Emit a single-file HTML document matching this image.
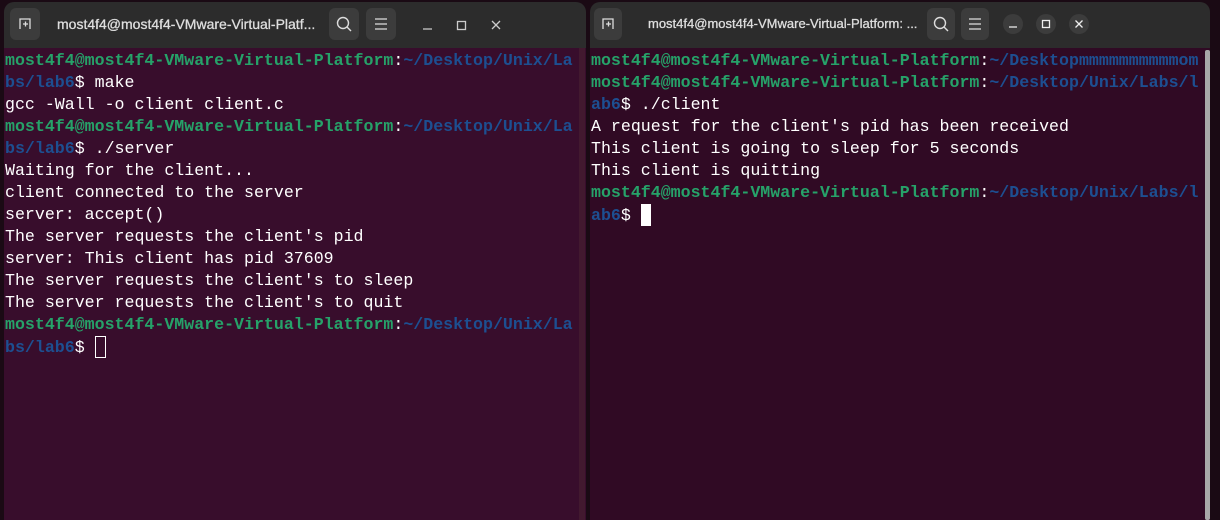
<!DOCTYPE html>
<html><head><style>
body{margin:0;width:1220px;height:520px;background:#1a0a14;position:relative;overflow:hidden;font-family:"Liberation Sans",sans-serif}
.win{position:absolute;top:2px;bottom:0;overflow:hidden;border-radius:10px 10px 0 0}
.hdr{position:absolute;left:0;right:0;top:0;height:46px;background:#2c2c2c}
.term{position:absolute;left:0;right:0;top:46px;bottom:0}
.btn{position:absolute;top:6px;width:30px;height:32px;background:#3c3c3c;border-radius:6px}
.title{position:absolute;top:14px;color:#dedede;font-size:14px;white-space:nowrap;-webkit-text-stroke:0.3px #dedede}
pre{margin:0;position:absolute;left:1px;top:2px;font-family:"Liberation Mono",monospace;font-size:16.6px;line-height:22px;color:#ffffff;font-weight:normal}
.g{color:#26a269;font-weight:bold}.b{color:#1d4f91;font-weight:bold}
.cur{display:inline-block;width:9px;height:19px;vertical-align:-4px}
svg{position:absolute}
</style></head><body>
<div class="win" style="left:4px;width:582px">
 <div class="hdr">
  <div class="btn" style="left:6px"><svg width="30" height="32"><path d="M10 21V11h10v10M13 16h5M15.5 13.5v5" stroke="#ddd" fill="none" stroke-width="1.3"/></svg></div>
  <div class="title" style="left:53px">most4f4@most4f4-VMware-Virtual-Platf...</div>
  <div class="btn" style="left:325px"><svg width="30" height="32"><circle cx="14" cy="15" r="5.5" stroke="#ddd" fill="none" stroke-width="1.4"/><path d="M18 19l4 4" stroke="#ddd" stroke-width="1.4"/></svg></div>
  <div class="btn" style="left:362px"><svg width="30" height="32"><path d="M9 11h12M9 16h12M9 21h12" stroke="#ddd" stroke-width="1.3"/></svg></div>
  <svg style="left:410px;top:8px" width="30" height="30"><path d="M9 19h9" stroke="#ccc" stroke-width="1.3"/></svg>
  <svg style="left:444px;top:8px" width="30" height="30"><rect x="9.5" y="11.5" width="8" height="8" stroke="#ccc" fill="none" stroke-width="1.3"/></svg>
  <svg style="left:478px;top:8px" width="30" height="30"><path d="M10 11l8 8M18 11l-8 8" stroke="#ccc" stroke-width="1.3"/></svg>
 </div>
 <div class="term" style="background:#380d2c">
<pre><span class="g">most4f4@most4f4-VMware-Virtual-Platform</span>:<span class="b">~/Desktop/Unix/La
bs/lab6</span>$ make
gcc -Wall -o client client.c
<span class="g">most4f4@most4f4-VMware-Virtual-Platform</span>:<span class="b">~/Desktop/Unix/La
bs/lab6</span>$ ./server
Waiting for the client...
client connected to the server
server: accept()
The server requests the client's pid
server: This client has pid 37609
The server requests the client's to sleep
The server requests the client's to quit
<span class="g">most4f4@most4f4-VMware-Virtual-Platform</span>:<span class="b">~/Desktop/Unix/La
bs/lab6</span>$ <span class="cur" style="border:1.5px solid #fff;box-sizing:border-box;height:22px;width:11px;vertical-align:-6px"></span></pre>
  <div style="position:absolute;left:575px;top:0;width:6px;bottom:0;background:#42192f"></div>
 </div>
</div>
<div class="win" style="left:590px;width:620px">
 <div class="hdr">
  <div class="btn" style="left:4px;width:28px"><svg width="28" height="32"><path d="M9 21V11h10v10M12 16h5M14.5 13.5v5" stroke="#ddd" fill="none" stroke-width="1.3"/></svg></div>
  <div class="title" style="left:58px;font-size:13px">most4f4@most4f4-VMware-Virtual-Platform: ...</div>
  <div class="btn" style="left:337px;width:28px"><svg width="28" height="32"><circle cx="13" cy="15" r="5.5" stroke="#ddd" fill="none" stroke-width="1.4"/><path d="M17 19l4 4" stroke="#ddd" stroke-width="1.4"/></svg></div>
  <div class="btn" style="left:371px;width:28px"><svg width="28" height="32"><path d="M8 11h12M8 16h12M8 21h12" stroke="#ddd" stroke-width="1.3"/></svg></div>
  <svg style="left:412px;top:11px" width="24" height="24"><circle cx="11" cy="11" r="10" fill="#3c3c3c"/><path d="M7 14h8" stroke="#eee" stroke-width="1.3"/></svg>
  <svg style="left:445px;top:11px" width="24" height="24"><circle cx="11" cy="11" r="10" fill="#3c3c3c"/><rect x="7.5" y="7.5" width="7" height="7" stroke="#eee" fill="none" stroke-width="1.3"/></svg>
  <svg style="left:478px;top:11px" width="24" height="24"><circle cx="11" cy="11" r="10" fill="#3c3c3c"/><path d="M7.5 7.5l7 7M14.5 7.5l-7 7" stroke="#eee" stroke-width="1.3"/></svg>
 </div>
 <div class="term" style="background:#300a24">
<pre><span class="g">most4f4@most4f4-VMware-Virtual-Platform</span>:<span class="b">~/Desktopmmmmmmmmmmom
</span><span class="g">most4f4@most4f4-VMware-Virtual-Platform</span>:<span class="b">~/Desktop/Unix/Labs/l
ab6</span>$ ./client
A request for the client's pid has been received
This client is going to sleep for 5 seconds
This client is quitting
<span class="g">most4f4@most4f4-VMware-Virtual-Platform</span>:<span class="b">~/Desktop/Unix/Labs/l
ab6</span>$ <span class="cur" style="background:#fff;height:22px;width:10px;vertical-align:-6px"></span></pre>
  <div style="position:absolute;left:615px;top:2px;width:5px;bottom:0;background:#a8a8a8;border-radius:2px"></div>
 </div>
</div>
</body></html>
